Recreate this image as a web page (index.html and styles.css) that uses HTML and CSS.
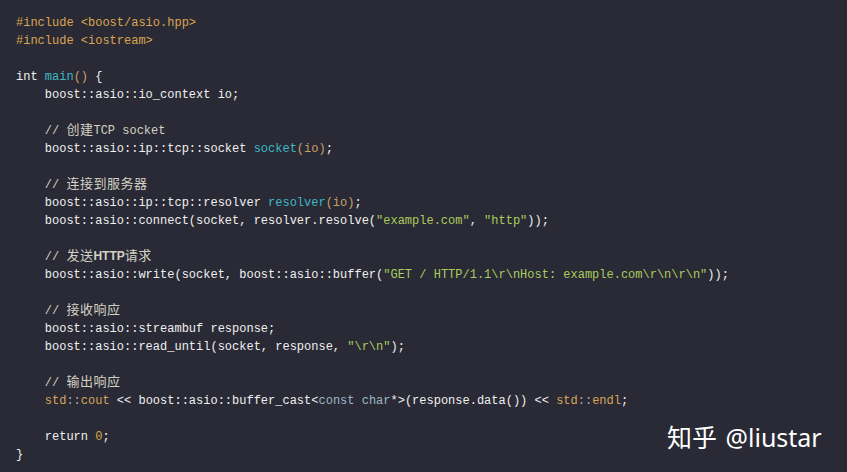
FILE: index.html
```html
<!DOCTYPE html>
<html>
<head>
<meta charset="utf-8">
<link rel="stylesheet" href="styles.css">
</head>
<body>
<div class="page">
<pre class="code"><span class="pp">#include &lt;boost/asio.hpp&gt;</span>
<span class="pp">#include &lt;iostream&gt;</span>

<span class="kw">int</span> <span class="fn">main</span><span class="pa">()</span> {
    boost::asio::io_context io;

    <span class="cm">// <span class="cjk">创建</span>TCP socket</span>
    boost::asio::ip::tcp::socket <span class="fn">socket</span><span class="pa">(io)</span>;

    <span class="cm">// <span class="cjk">连接到服务器</span></span>
    boost::asio::ip::tcp::resolver <span class="fn">resolver</span><span class="pa">(io)</span>;
    boost::asio::connect(socket, resolver.resolve(<span class="st">"example.com"</span>, <span class="st">"http"</span>));

    <span class="cm">// <span class="cjk">发送</span><span class="sans">HTTP</span><span class="cjk">请求</span></span>
    boost::asio::write(socket, boost::asio::buffer(<span class="st">"GET / HTTP/1.1\r\nHost: example.com\r\n\r\n"</span>));

    <span class="cm">// <span class="cjk">接收响应</span></span>
    boost::asio::streambuf response;
    boost::asio::read_until(socket, response, <span class="st">"\r\n"</span>);

    <span class="cm">// <span class="cjk">输出响应</span></span>
    <span class="ns">std</span><span class="op">::</span><span class="ns">cout</span> &lt;&lt; boost::asio::buffer_cast&lt;<span class="ty">const char</span>*&gt;(response.data()) &lt;&lt; <span class="ns">std</span><span class="op">::</span><span class="ns">endl</span>;

    return <span class="nu">0</span>;
}</pre>
<div class="mark"><span class="mark-cn">知乎</span> @liustar</div>
</div>
</body>
</html>
```
FILE: styles.css
```css
html, body {
  margin: 0;
  padding: 0;
  background: #292a35;
}

.page {
  position: relative;
  width: 847px;
  height: 472px;
  overflow: hidden;
  background: #292a35;
}

.code {
  margin: 0;
  padding: 14px 0 0 16px;
  font-family: "Liberation Mono", "DejaVu Sans Mono", "Noto Sans CJK SC", monospace;
  font-size: 12px;
  line-height: 18px;
  color: #f0f0f0;
  white-space: pre;
}

.pp { color: #dba54f; }
.kw { color: #f0f0f0; }
.fn { color: #3db7c6; }
.pa { color: #c9a064; }
.st { color: #a9cc5c; }
.cm { color: #d4d2c4; }
.ns { color: #d7a55a; }
.op { color: #a9a9a9; }
.ty { color: #9bb8c6; }
.nu { color: #dba54f; }

.cjk {
  font-family: "Noto Sans CJK SC", sans-serif;
  font-size: 13px;
  letter-spacing: 0.5px;
  line-height: 0;
}

.sans {
  font-family: "Liberation Sans", sans-serif;
  font-weight: bold;
  font-size: 12px;
  line-height: 0;
}

.mark {
  position: absolute;
  left: 667px;
  top: 418px;
  font-family: "Noto Sans", "Noto Sans CJK SC", sans-serif;
  font-size: 25px;
  line-height: 36px;
  color: #ffffff;
  white-space: nowrap;
}

.mark-cn {
  font-family: "Noto Sans CJK SC", sans-serif;
  margin-right: 2px;
}
```
